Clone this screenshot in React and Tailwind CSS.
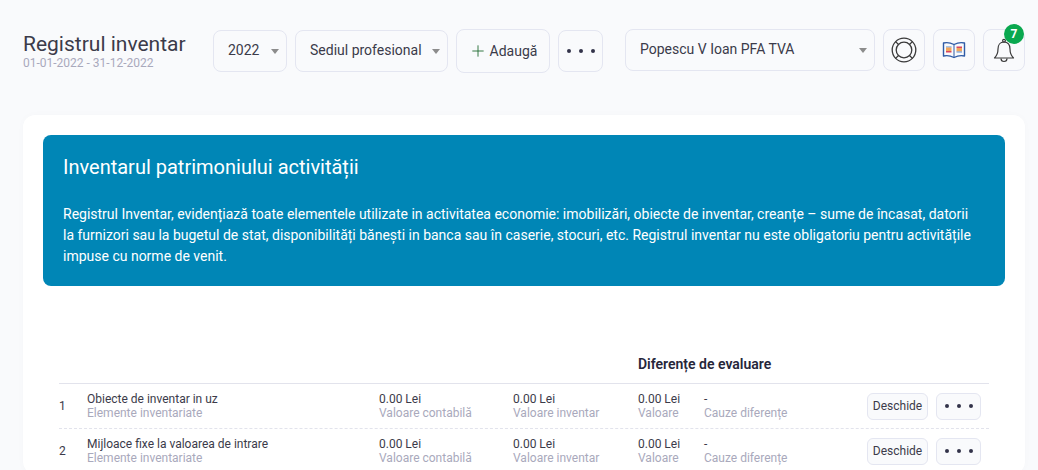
import React from "react";
import { Plus } from "lucide-react";

const rows = [
  { id: 1, name: "Obiecte de inventar in uz" },
  { id: 2, name: "Mijloace fixe la valoarea de intrare" },
];

function Dots() {
  return (
    <span className="flex items-center gap-[8px]">
      <i className="h-[4px] w-[4px] rounded-full bg-[#33334a]" />
      <i className="h-[4px] w-[4px] rounded-full bg-[#33334a]" />
      <i className="h-[4px] w-[4px] rounded-full bg-[#33334a]" />
    </span>
  );
}

function Select({ label, className }) {
  return (
    <button className={`flex h-[42px] items-center justify-between rounded-lg border border-[#e4e6f1] pb-[2px] pl-[14px] pr-[7px] text-sm text-[#3b3b4a] ${className}`}>
      <span>{label}</span>
      <span className="mt-[2px] h-0 w-0 border-x-[4px] border-t-[5px] border-x-transparent border-t-[#8c8c8c]" />
    </button>
  );
}

function IconButton({ children }) {
  return (
    <button className="relative flex h-[42px] w-[42px] items-center justify-center rounded-lg border border-[#e4e6f1]">
      {children}
    </button>
  );
}

function Cell({ top, bottom }) {
  return (
    <div className="text-xs leading-[14px]">
      <div className="text-[#3b3b4a]">{top}</div>
      <div className="text-[#a9a9bc]">{bottom}</div>
    </div>
  );
}

export default function App() {
  return (
    <div className="h-[470px] overflow-hidden bg-[#f9fafc] font-['Roboto',sans-serif]">
      {/* Header */}
      <div className="flex h-[115px] items-start pl-[23px] pt-[29px]">
        <div className="mr-[27px] w-[163px] pt-[3px]">
          <h1 className="text-[21px] leading-[24px] text-[#3b3b4a]">Registrul inventar</h1>
          <p className="text-xs leading-[14px] text-[#a9a9bc]">01-01-2022 - 31-12-2022</p>
        </div>
        <div className="flex items-center gap-2">
          <Select label="2022" className="w-[74px]" />
          <Select label="Sediul profesional" className="w-[153px]" />
          <button className="flex h-[44px] w-[94px] items-center justify-center gap-[3px] rounded-lg border border-[#e4e6f1] text-sm text-[#3b3b4a]">
            <Plus size={18} strokeWidth={1.2} className="text-[#1f6b32]" />
            Adaugă
          </button>
          <button className="flex h-[42px] w-[45px] items-center justify-center rounded-lg border border-[#e4e6f1]">
            <Dots />
          </button>
        </div>
        <div className="ml-[22px] flex items-center gap-2">
          <Select label="Popescu V Ioan PFA TVA" className="w-[250px]" />
          <IconButton>
            <svg width="26" height="26" viewBox="0 0 26 26" fill="none" stroke="#3a3a3a" strokeWidth="1.300">
              <circle cx="13" cy="13" r="11.800" />
              <circle cx="13" cy="13" r="7.800" />
              <path d="M4.600 4.600 7.500 7.500M21.400 4.600 18.500 7.500M4.600 21.400 7.500 18.500M21.400 21.400 18.500 18.500" />
            </svg>
          </IconButton>
          <IconButton>
            <svg width="24" height="18" viewBox="0 0 24 18" fill="none">
              <path d="M1.500 2c3.500-.8 7-.3 10.500 1.500C15.500 1.700 19 1.200 22.500 2v13c-3.500-.8-7-.3-10.500 1.500C8.500 14.700 5 14.200 1.500 15z" stroke="#2f5ba6" strokeWidth="1.400" strokeLinejoin="round" />
              <path d="M12 3.500v13" stroke="#2f5ba6" strokeWidth="1" />
              <path d="M4 5.500h5.500v1H4z" fill="#5b8fd0" />
              <path d="M4 6.500h5.500v3.500H4z" fill="#f2a65a" />
              <path d="M4 10h5.500v1.500H4z" fill="#d9455f" />
              <path d="M14.500 5.500H20v1.500h-5.500z" fill="#d9455f" />
              <path d="M14.500 7H20v3.500h-5.500z" fill="#f2a65a" />
              <path d="M14.500 10.500H20v1h-5.500z" fill="#5b8fd0" />
            </svg>
          </IconButton>
          <IconButton>
            <svg width="22" height="26" viewBox="0 0 22 26" fill="none" stroke="#3a3a3a" strokeWidth="1.200" strokeLinejoin="round" className="mt-[2px]">
              <path d="M11 4c-4 0-6 3-6 7 0 5-1.500 7-3.500 9h19c-2-2-3.500-4-3.500-9 0-4-2-7-6-7z" />
              <circle cx="11" cy="2.800" r="1.400" />
              <path d="M8 20.500c0 2 1.300 3 3 3s3-1 3-3" />
            </svg>
            <span className="absolute right-0 -top-[6px] flex h-5 w-5 items-center justify-center rounded-full bg-[#0aa84f] text-xs font-bold text-white">
              7
            </span>
          </IconButton>
        </div>
      </div>

      {/* Card */}
      <div className="ml-[23px] w-[1002px] rounded-xl bg-white p-5 pb-0 shadow-[0_0_8px_rgba(0,0,0,0.02)]">
        <div className="h-[151px] rounded-lg bg-[#0086b6] pl-5 pr-[30px] pt-5 text-white">
          <h2 className="text-xl leading-6">Inventarul patrimoniului activității</h2>
          <p className="mt-[25px] text-sm leading-[21px]">
            Registrul Inventar, evidențiază toate elementele utilizate in activitatea economie: imobilizări, obiecte de inventar, creanțe – sume de încasat, datorii la furnizori sau la bugetul de stat, disponibilități bănești in banca sau în caserie, stocuri, etc. Registrul inventar nu este obligatoriu pentru activitățile impuse cu norme de venit.
          </p>
        </div>

        <div className="mx-4 mt-[67px]">
          <div className="flex h-[31px] border-b border-[#e2e3ec] pl-[579px] pt-px">
            <span className="text-sm font-semibold leading-[21px] text-[#26263a]">Diferențe de evaluare</span>
          </div>
          {rows.map((row) => (
            <div
              key={row.id}
              className="grid h-[45px] grid-cols-[28px_292px_134px_125px_66px_163px_1fr] items-center border-b border-dashed border-[#e2e3ec] text-xs"
            >
              <span className="text-[#3b3b4a]">{row.id}</span>
              <Cell top={row.name} bottom="Elemente inventariate" />
              <Cell top="0.00 Lei" bottom="Valoare contabilă" />
              <Cell top="0.00 Lei" bottom="Valoare inventar" />
              <Cell top="0.00 Lei" bottom="Valoare" />
              <Cell top="-" bottom="Cauze diferențe" />
              <div className="flex items-center gap-2">
                <button className="flex h-[27px] w-[61px] items-center justify-center rounded-md border border-[#e4e6f1] bg-[#f9fafc] text-xs text-[#3b3b4a]">
                  Deschide
                </button>
                <button className="flex h-[27px] w-[45px] items-center justify-center rounded-md border border-[#e4e6f1] bg-[#f9fafc]">
                  <Dots />
                </button>
              </div>
            </div>
          ))}
        </div>
      </div>
    </div>
  );
}
